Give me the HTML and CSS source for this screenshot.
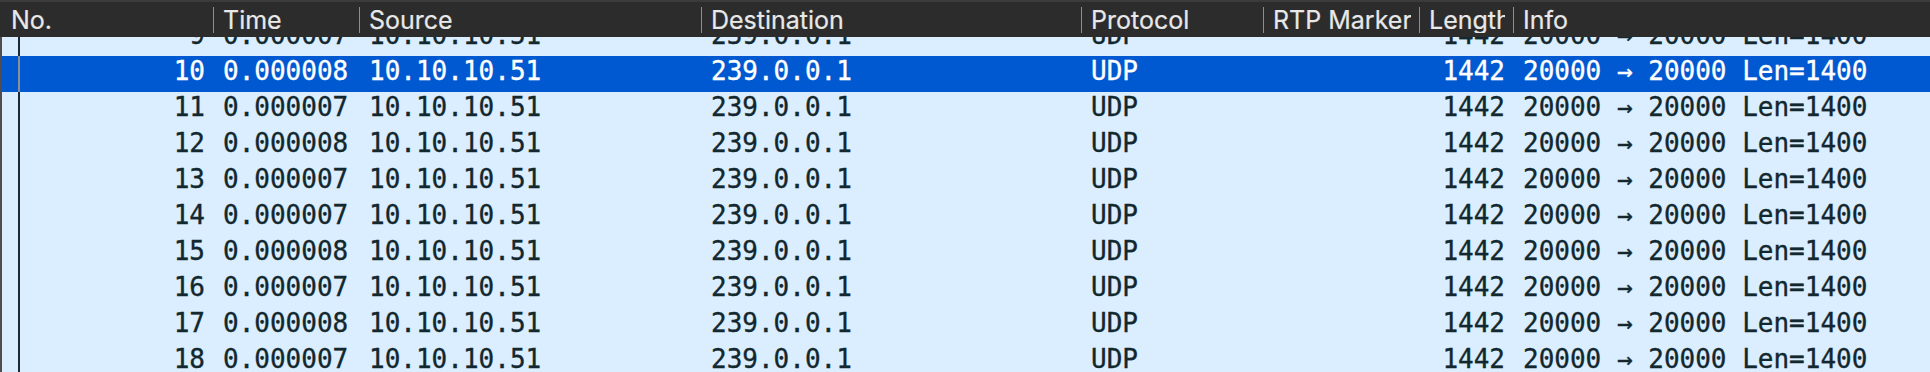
FILE: index.html
```html
<!DOCTYPE html>
<html>
<head>
<meta charset="utf-8">
<link rel="stylesheet" href="styles.css">
</head>
<body>
<div class="packet-list">
  <div class="header">
    <div class="hcell first"><span class="hlabel">No.</span></div>
    <div class="hcell"><span class="hlabel">Time</span></div>
    <div class="hcell"><span class="hlabel">Source</span></div>
    <div class="hcell"><span class="hlabel">Destination</span></div>
    <div class="hcell"><span class="hlabel">Protocol</span></div>
    <div class="hcell"><span class="hlabel">RTP Marker</span></div>
    <div class="hcell"><span class="hlabel">Length</span></div>
    <div class="hcell"><span class="hlabel">Info</span></div>
  </div>
  <div class="viewport">
    <div class="rows">
      <div class="row"><span class="c num">9</span><span class="c">0.000007</span><span class="c">10.10.10.51</span><span class="c">239.0.0.1</span><span class="c">UDP</span><span class="c"></span><span class="c right">1442</span><span class="c">20000 → 20000 Len=1400</span></div>
      <div class="row selected"><span class="c num">10</span><span class="c">0.000008</span><span class="c">10.10.10.51</span><span class="c">239.0.0.1</span><span class="c">UDP</span><span class="c"></span><span class="c right">1442</span><span class="c">20000 → 20000 Len=1400</span></div>
      <div class="row"><span class="c num">11</span><span class="c">0.000007</span><span class="c">10.10.10.51</span><span class="c">239.0.0.1</span><span class="c">UDP</span><span class="c"></span><span class="c right">1442</span><span class="c">20000 → 20000 Len=1400</span></div>
      <div class="row"><span class="c num">12</span><span class="c">0.000008</span><span class="c">10.10.10.51</span><span class="c">239.0.0.1</span><span class="c">UDP</span><span class="c"></span><span class="c right">1442</span><span class="c">20000 → 20000 Len=1400</span></div>
      <div class="row"><span class="c num">13</span><span class="c">0.000007</span><span class="c">10.10.10.51</span><span class="c">239.0.0.1</span><span class="c">UDP</span><span class="c"></span><span class="c right">1442</span><span class="c">20000 → 20000 Len=1400</span></div>
      <div class="row"><span class="c num">14</span><span class="c">0.000007</span><span class="c">10.10.10.51</span><span class="c">239.0.0.1</span><span class="c">UDP</span><span class="c"></span><span class="c right">1442</span><span class="c">20000 → 20000 Len=1400</span></div>
      <div class="row"><span class="c num">15</span><span class="c">0.000008</span><span class="c">10.10.10.51</span><span class="c">239.0.0.1</span><span class="c">UDP</span><span class="c"></span><span class="c right">1442</span><span class="c">20000 → 20000 Len=1400</span></div>
      <div class="row"><span class="c num">16</span><span class="c">0.000007</span><span class="c">10.10.10.51</span><span class="c">239.0.0.1</span><span class="c">UDP</span><span class="c"></span><span class="c right">1442</span><span class="c">20000 → 20000 Len=1400</span></div>
      <div class="row"><span class="c num">17</span><span class="c">0.000008</span><span class="c">10.10.10.51</span><span class="c">239.0.0.1</span><span class="c">UDP</span><span class="c"></span><span class="c right">1442</span><span class="c">20000 → 20000 Len=1400</span></div>
      <div class="row"><span class="c num">18</span><span class="c">0.000007</span><span class="c">10.10.10.51</span><span class="c">239.0.0.1</span><span class="c">UDP</span><span class="c"></span><span class="c right">1442</span><span class="c">20000 → 20000 Len=1400</span></div>
    </div>
  </div>
</div>
</body>
</html>
```
FILE: styles.css
```css
html, body {
  margin: 0;
  padding: 0;
  background: #daeeff;
  overflow: hidden;
}

.packet-list {
  width: 1930px;
  height: 372px;
  display: flex;
  flex-direction: column;
  overflow: hidden;
}

.header {
  flex: 0 0 auto;
  height: 35px;
  border-top: 2px solid #3b3b3b;
  background: #2c2c2c;
  display: grid;
  grid-template-columns: 213px 146px 342px 380px 182px 156px 94px 1fr;
  align-items: start;
  font-family: "Inter", "Liberation Sans", sans-serif;
  font-size: 25px;
  color: #e8e8e8;
  -webkit-text-stroke: 0.2px currentColor;
}

.hcell {
  margin-top: 5px;
  height: 26px;
  line-height: 26px;
  border-left: 1px solid #8f8f8f;
  padding: 0 8px 0 9px;
  white-space: nowrap;
}

.hcell.first {
  border-left: none;
  padding-left: 11px;
}

.hlabel {
  display: block;
  overflow: hidden;
}

.viewport {
  flex: 1 1 auto;
  overflow: hidden;
}

.rows {
  margin-top: -17px;
}

.row {
  display: grid;
  grid-template-columns: 213px 146px 342px 380px 182px 156px 94px 1fr;
  height: 36px;
  background: #daeeff;
  color: #12272e;
  font-family: "DejaVu Sans Mono", "Liberation Mono", monospace;
  font-size: 26px;
  line-height: 30px;
  -webkit-text-stroke: 0.35px currentColor;
}

.row.selected {
  background: #0059d1;
  color: #ffffff;
}

.c {
  padding: 0 8px 0 10px;
  white-space: nowrap;
  overflow: hidden;
}

.c.num {
  text-align: right;
  background: linear-gradient(to right, #4e4e4e 0 2px, transparent 2px 18px, #1b2a33 18px 20px, transparent 20px);
}

.row.selected .c.num {
  background: linear-gradient(to right, #4e4e4e 0 2px, transparent 2px 18px, #8a8f99 18px 20px, transparent 20px);
}

.c.right {
  text-align: right;
}
```
